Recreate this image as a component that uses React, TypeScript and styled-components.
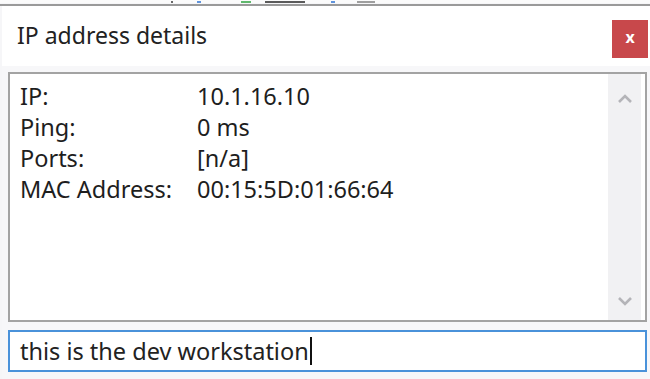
import React from "react";
import styled, { createGlobalStyle } from "styled-components";

const Global = createGlobalStyle`
  html, body { margin: 0; padding: 0; background: #f6f6f8; }
  * { box-sizing: border-box; }
`;

const Page = styled.div`
  width: 650px;
  height: 379px;
  overflow: hidden;
  background: #f6f6f8;
  font-family: "Noto Sans", "Open Sans", sans-serif;
  color: #1b1b1b;
  display: flex;
  flex-direction: column;
`;

const TopStrip = styled.div`
  height: 6px;
  flex: none;
  border-top: 3px solid #fbfbfb;
  border-bottom: 2px solid #9a9a9a;
  display: flex;
  align-items: flex-start;
  padding-left: 171px;
`;

const Frag = styled.span<{ $c: string; $w: number; $ml: number }>`
  display: block;
  width: ${(p) => p.$w}px;
  height: 2px;
  margin-left: ${(p) => p.$ml}px;
  background: ${(p) => p.$c};
  margin-top: -2px;
  opacity: 0.8;
`;

const Dialog = styled.div`
  flex: 1;
  display: flex;
  flex-direction: column;
  background: #ffffff;
  margin-left: 2px;
`;

const TitleRow = styled.div`
  height: 60px;
  display: flex;
  align-items: center;
  justify-content: space-between;
  padding: 4px 2px 0 15px;
  flex: none;
`;

const Title = styled.h1`
  margin: 0;
  font-weight: 400;
  font-size: 23px;
  color: #222;
  margin-top: -6px;
`;

const CloseButton = styled.button`
  width: 36px;
  height: 38px;
  border: none;
  background: #c8484b;
  color: #fff;
  font-family: "Noto Sans", sans-serif;
  font-weight: 700;
  font-size: 16px;
  line-height: 1;
  padding: 0 0 4px 0;
  margin-top: 2px;
`;

const Body = styled.div`
  flex: 1;
  display: flex;
  flex-direction: column;
  gap: 8px;
  padding: 6px 3px 0 6px;
  background: #f7f7f9;
`;

const ListBox = styled.div`
  height: 250px;
  border: 2px solid #a3a3a3;
  background: #fff;
  display: flex;
`;

const Rows = styled.div`
  flex: 1;
  padding: 7px 0 0 10px;
  display: grid;
  grid-template-columns: 177px 1fr;
  grid-auto-rows: 31px;
  align-content: start;
  font-size: 23.5px;
  line-height: 31px;
  color: #1e1e1e;
`;

const Cell = styled.div`
  white-space: nowrap;
`;

const ScrollBar = styled.div`
  width: 33px;
  background: #f1f1f3;
  display: flex;
  flex-direction: column;
  justify-content: space-between;
  align-items: center;
  padding: 20px 0 14px 0;
  margin-right: 4px;
`;

const Input = styled.div`
  height: 42px;
  border: 2px solid #4a92da;
  background: #fff;
  display: flex;
  align-items: center;
  padding-left: 10px;
  font-size: 23.5px;
  color: #222;
  white-space: nowrap;
`;

const Caret = styled.span`
  display: inline-block;
  width: 2px;
  height: 28px;
  background: #111;
  margin-left: 1px;
`;

const Chevron = ({ up }: { up?: boolean }) => (
  <svg width="16" height="10" viewBox="0 0 16 10">
    <path
      d={up ? "M2 8 L8 2 L14 8" : "M2 2 L8 8 L14 2"}
      fill="none"
      stroke="#b4b4b8"
      strokeWidth="2.6"
    />
  </svg>
);

const rows: [string, string][] = [
  ["IP:", "10.1.16.10"],
  ["Ping:", "0 ms"],
  ["Ports:", "[n/a]"],
  ["MAC Address:", "00:15:5D:01:66:64"],
];

export default function App() {
  return (
    <Page>
      <Global />
      <TopStrip>
        <Frag $c="#444" $w={2} $ml={0} />
        <Frag $c="#3a7bd5" $w={4} $ml={24} />
        <Frag $c="#3aa84a" $w={10} $ml={40} />
        <Frag $c="#333" $w={40} $ml={14} />
        <Frag $c="#3a7bd5" $w={4} $ml={26} />
        <Frag $c="#888" $w={18} $ml={22} />
      </TopStrip>
      <Dialog>
        <TitleRow>
          <Title>IP address details</Title>
          <CloseButton>x</CloseButton>
        </TitleRow>
        <Body>
          <ListBox>
            <Rows>
              {rows.map(([k, v]) => (
                <React.Fragment key={k}>
                  <Cell>{k}</Cell>
                  <Cell>{v}</Cell>
                </React.Fragment>
              ))}
            </Rows>
            <ScrollBar>
              <Chevron up />
              <Chevron />
            </ScrollBar>
          </ListBox>
          <Input>
            this is the dev workstation
            <Caret />
          </Input>
        </Body>
      </Dialog>
    </Page>
  );
}
